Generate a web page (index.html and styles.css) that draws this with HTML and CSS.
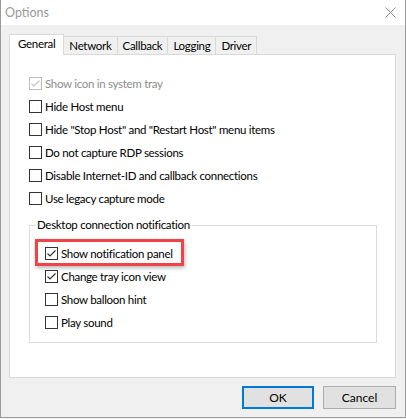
FILE: index.html
```html
<!DOCTYPE html>
<html>
<head>
<meta charset="utf-8">
<title>Options</title>
<link rel="stylesheet" href="styles.css">
</head>
<body>
<div class="window">
  <div class="titlebar">
    <span class="title">Options</span>
    <svg class="close" width="11" height="11" viewBox="0 0 11 11"><path d="M0.5 0.5 L10.5 10.5 M10.5 0.5 L0.5 10.5" stroke="#8a8a8a" stroke-width="1" fill="none"/></svg>
  </div>
  <div class="body">
    <div class="tabs">
      <div class="tab active">General</div>
      <div class="tab">Network</div>
      <div class="tab">Callback</div>
      <div class="tab">Logging</div>
      <div class="tab">Driver</div>
    </div>
    <div class="panel">
      <div class="row disabled"><span class="cb checked"><svg width="13" height="13" viewBox="0 0 13 13"><path d="M2.5 6.5 L5 9 L10.5 3.5" fill="none" stroke="#c4c4c4" stroke-width="1.2"/></svg></span><span class="label">Show icon in system tray</span></div>
      <div class="row"><span class="cb"></span><span class="label">Hide Host menu</span></div>
      <div class="row"><span class="cb"></span><span class="label">Hide "Stop Host" and "Restart Host" menu items</span></div>
      <div class="row"><span class="cb"></span><span class="label">Do not capture RDP sessions</span></div>
      <div class="row"><span class="cb"></span><span class="label">Disable Internet-ID and callback connections</span></div>
      <div class="row"><span class="cb"></span><span class="label">Use legacy capture mode</span></div>
      <fieldset class="group">
        <legend>Desktop connection notification</legend>
        <div class="row highlighted"><span class="cb checked"><svg width="13" height="13" viewBox="0 0 13 13"><path d="M2.5 6.5 L5 9 L10.5 3.5" fill="none" stroke="#333" stroke-width="1.2"/></svg></span><span class="label">Show notification panel</span><span class="mark"></span></div>
        <div class="row"><span class="cb checked"><svg width="13" height="13" viewBox="0 0 13 13"><path d="M2.5 6.5 L5 9 L10.5 3.5" fill="none" stroke="#333" stroke-width="1.2"/></svg></span><span class="label">Change tray icon view</span></div>
        <div class="row"><span class="cb"></span><span class="label">Show balloon hint</span></div>
        <div class="row"><span class="cb"></span><span class="label">Play sound</span></div>
      </fieldset>
    </div>
    <div class="footer">
      <button class="btn default">OK</button>
      <button class="btn">Cancel</button>
    </div>
  </div>
</div>
</body>
</html>
```
FILE: styles.css
```css
html, body {
  margin: 0;
  padding: 0;
  background: #f0f0f0;
}
body {
  font-family: "Lato", "Noto Sans", sans-serif;
  font-size: 11.5px;
  letter-spacing: -0.3px;
  color: #000;
}
.window {
  width: 406px;
  height: 418px;
  box-sizing: border-box;
  border-left: 1px solid #9a9a9a;
  border-right: 1px solid #9a9a9a;
  border-bottom: 1px solid #9a9a9a;
  background: #f0f0f0;
  display: flex;
  flex-direction: column;
}
.titlebar {
  height: 25px;
  background: #fff;
  display: flex;
  align-items: center;
  justify-content: space-between;
  padding: 0 9px 0 4px;
  flex: none;
}
.title {
  color: #999;
  font-size: 12.5px;
  letter-spacing: 0;
  margin-top: -1px;
}
.close {
  display: block;
  margin-top: -1px;
}
.body {
  flex: 1;
  padding: 9px 9px 0 8px;
  display: flex;
  flex-direction: column;
}
.tabs {
  display: flex;
  align-items: flex-end;
  height: 20px;
  position: relative;
  z-index: 1;
}
.tab {
  height: 18px;
  box-sizing: border-box;
  border: 1px solid #d9d9d9;
  border-bottom: none;
  padding: 0 5px;
  margin-left: -1px;
  line-height: 17px;
  background: #f0f0f0;
}
.tab.active {
  height: 21px;
  margin-bottom: -1px;
  margin-left: 0;
  padding: 0 8px;
  background: #fff;
  line-height: 17px;
  position: relative;
  z-index: 2;
}
.panel {
  height: 324px;
  box-sizing: border-box;
  border: 1px solid #d9d9d9;
  background: #fff;
  padding: 17px 0 0 19px;
}
.row {
  height: 23px;
  display: flex;
  align-items: center;
  position: relative;
}
.cb {
  width: 13px;
  height: 13px;
  box-sizing: border-box;
  border: 1px solid #333;
  background: #fff;
  flex: none;
  position: relative;
  margin-right: 3px;
}
.cb svg {
  position: absolute;
  left: -1px;
  top: -1px;
}
.disabled .cb {
  border-color: #bcbcbc;
}
.disabled .label {
  color: #8d8d8d;
}
.group {
  width: 348px;
  height: 126px;
  box-sizing: border-box;
  margin: 7px 0 0 0;
  border: 1px solid #dcdcdc;
  padding: 9px 0 0 15px;
}
.group legend {
  padding: 0 1px;
  margin-left: -9px;
  line-height: 16px;
}
.mark {
  position: absolute;
  left: -10px;
  top: -3px;
  width: 149px;
  height: 27px;
  box-sizing: border-box;
  border: 3px solid #ef4347;
  box-shadow: 1px 2px 4px rgba(0, 0, 0, 0.28);
}
.footer {
  display: flex;
  justify-content: flex-end;
  gap: 9px;
  margin-top: 8px;
}
.btn {
  width: 73px;
  height: 23px;
  box-sizing: border-box;
  border: 1px solid #adadad;
  background: #e1e1e1;
  font-family: inherit;
  font-size: 12px;
  letter-spacing: 0;
  color: #000;
  padding: 0;
  margin: 0;
}
.btn.default {
  width: 72px;
  border: 2px solid #0078d7;
}
```
